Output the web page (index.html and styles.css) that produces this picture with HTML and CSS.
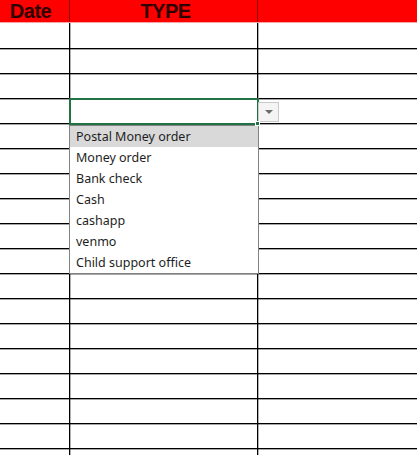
FILE: index.html
```html
<!DOCTYPE html>
<html lang="en">
<head>
    <meta charset="UTF-8">
    <meta name="viewport" content="width=device-width, initial-scale=1.0">
    <title>Payments</title>
    <link rel="stylesheet" href="styles.css">
</head>
<body>
    <div class="sheet">
        <div class="row head">
            <div class="cell date">Date</div>
            <div class="cell type">TYPE</div>
            <div class="cell"></div>
        </div>
        <div class="row first"><div class="cell"></div><div class="cell"></div><div class="cell"></div></div>
        <div class="row"><div class="cell"></div><div class="cell"></div><div class="cell"></div></div>
        <div class="row"><div class="cell"></div><div class="cell"></div><div class="cell"></div></div>
        <div class="row">
            <div class="cell"></div>
            <div class="cell active">
                <div class="frame"></div>
                <div class="handle"></div>
                <div class="drop-btn"><span class="caret"></span></div>
                <ul class="list">
                    <li class="hover">Postal Money order</li>
                    <li>Money order</li>
                    <li>Bank check</li>
                    <li>Cash</li>
                    <li>cashapp</li>
                    <li>venmo</li>
                    <li>Child support office</li>
                </ul>
            </div>
            <div class="cell"></div>
        </div>
        <div class="row"><div class="cell"></div><div class="cell"></div><div class="cell"></div></div>
        <div class="row"><div class="cell"></div><div class="cell"></div><div class="cell"></div></div>
        <div class="row"><div class="cell"></div><div class="cell"></div><div class="cell"></div></div>
        <div class="row"><div class="cell"></div><div class="cell"></div><div class="cell"></div></div>
        <div class="row"><div class="cell"></div><div class="cell"></div><div class="cell"></div></div>
        <div class="row"><div class="cell"></div><div class="cell"></div><div class="cell"></div></div>
        <div class="row"><div class="cell"></div><div class="cell"></div><div class="cell"></div></div>
        <div class="row"><div class="cell"></div><div class="cell"></div><div class="cell"></div></div>
        <div class="row"><div class="cell"></div><div class="cell"></div><div class="cell"></div></div>
        <div class="row"><div class="cell"></div><div class="cell"></div><div class="cell"></div></div>
        <div class="row"><div class="cell"></div><div class="cell"></div><div class="cell"></div></div>
        <div class="row"><div class="cell"></div><div class="cell"></div><div class="cell"></div></div>
        <div class="row"><div class="cell"></div><div class="cell"></div><div class="cell"></div></div>
        <div class="row"><div class="cell"></div><div class="cell"></div><div class="cell"></div></div>
    </div>
</body>
</html>
```

FILE: styles.css
```css
* {
    margin: 0;
    padding: 0;
    box-sizing: border-box;
}
body {
    background: #fff;
    font-family: "Liberation Sans", Arial, sans-serif;
}
.sheet {
    width: 417px;
    height: 455px;
    overflow: hidden;
}
/* grid lines are a touch heavier than a hairline */
.row {
    display: grid;
    grid-template-columns: 70px 188px 1fr;
    height: 25px;
    border-bottom: 1px solid #000;
    box-shadow: 0 1px 0 rgba(0, 0, 0, 0.35);
}
.cell {
    border-right: 1px solid #000;
    box-shadow: 1px 0 0 rgba(0, 0, 0, 0.3);
}
.cell:last-child {
    border-right: none;
    box-shadow: none;
}

/* header band */
.row.head {
    height: 23px;
    background: #ff0000;
    border-bottom: 1px solid #f7a4a4;
    box-shadow: none;
}
.head .cell {
    border-right-color: #8c0000;
    box-shadow: none;
    font-size: 20px;
    font-weight: bold;
    letter-spacing: -0.5px;
    color: #2e0000;
    text-align: center;
    line-height: 22px;
}
.head .date {
    padding-right: 8px;
}
.head .type {
    padding-left: 4px;
}
.row.first {
    height: 26px;
}

/* selected cell with its validation list */
.active {
    position: relative;
}
.frame {
    position: absolute;
    top: -1px;
    left: -1px;
    width: 190px;
    height: 27px;
    border: 2px solid #217346;
    z-index: 1;
}
.handle {
    position: absolute;
    left: 185px;
    top: 22px;
    width: 5px;
    height: 5px;
    background: #217346;
    border: 1px solid #fff;
    z-index: 3;
}
.drop-btn {
    position: absolute;
    left: 188px;
    top: 3px;
    width: 21px;
    height: 20px;
    background: #f4f4f4;
    border: 1px solid #c9c9c9;
    display: flex;
    align-items: center;
    justify-content: center;
    z-index: 2;
}
.caret {
    width: 0;
    height: 0;
    border-left: 4px solid transparent;
    border-right: 4px solid transparent;
    border-top: 4px solid #6b6b6b;
}
.list {
    position: absolute;
    top: 26px;
    left: -1px;
    width: 190px;
    list-style: none;
    background: #fff;
    border: 1px solid #828282;
    z-index: 2;
}
.list li {
    height: 21px;
    line-height: 22px;
    padding-left: 6px;
    font-family: "Noto Sans", "Open Sans", sans-serif;
    font-size: 12.5px;
    color: #1e1e1e;
}
.list li.hover {
    background: #d9d9d9;
}
```
